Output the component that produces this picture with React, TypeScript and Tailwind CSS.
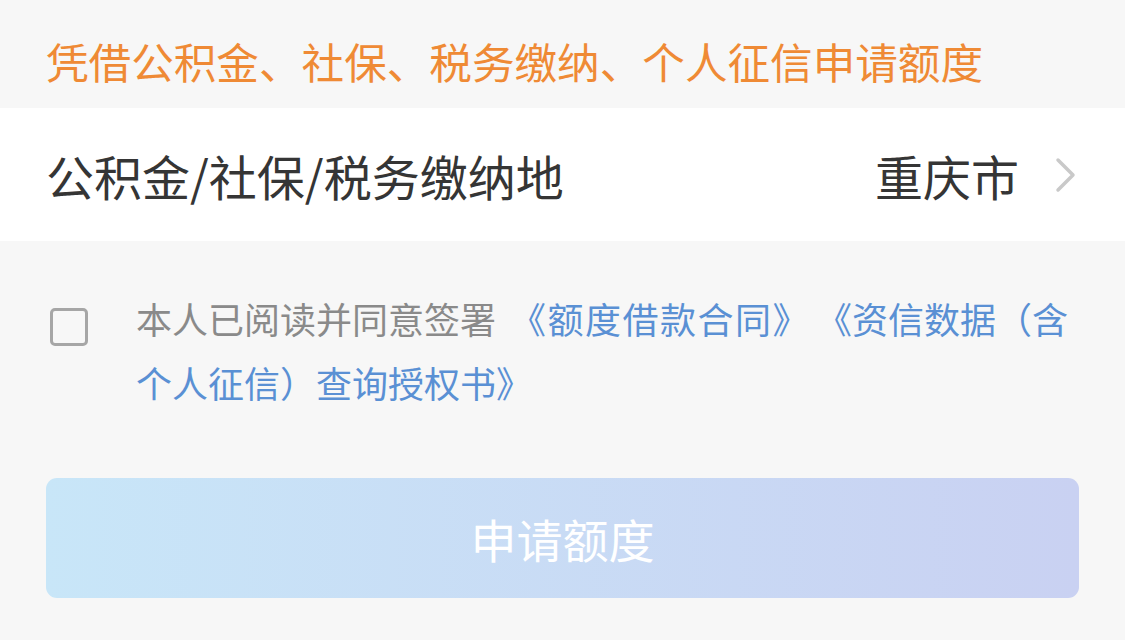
const font = { fontFamily: '"Noto Sans CJK SC", "Noto Sans", sans-serif' }

export default function App() {
  return (
    <div className="w-[1125px] h-[640px] bg-[#f7f7f7] overflow-hidden" style={font}>
      {/* Tip */}
      <div className="h-[108px] pl-[46px] flex items-center">
        <span className="text-[42.6px] leading-none text-[#ef8a35] pt-[14px]">
          凭借公积金、社保、税务缴纳、个人征信申请额度
        </span>
      </div>

      {/* Location row */}
      <div className="h-[133px] bg-white pl-[46px] pr-[48px] flex items-center justify-between">
        <span className="text-[48px] leading-none text-[#353535]">公积金/社保/税务缴纳地</span>
        <div className="flex items-center gap-[36px]">
          <span className="text-[48px] leading-none text-[#353535]">重庆市</span>
          <svg width="22" height="36" viewBox="0 0 22 36" fill="none">
            <path d="M3 3 L18 18 L3 33" stroke="#c9c9c9" strokeWidth="3.5" strokeLinecap="round" strokeLinejoin="round" />
          </svg>
        </div>
      </div>

      {/* Agreement */}
      <div className="flex items-start pl-[50px] pr-[45px] pt-[45px]">
        <div className="w-[38px] h-[38px] mt-[22px] shrink-0 border-[3px] border-[#a6a6a6] rounded-[5px]" />
        <p className="ml-[48px] text-[36px] leading-[64px] text-[#8a8a8a]">
          本人已阅读并同意签署
          <span className="text-[#5a90d4]">
            <span className="ml-[14px] tracking-[1.5px]">《额度借款合同》</span>
            <span className="ml-[24px]">《资信数据（含个人征信）查询授权书》</span>
          </span>
        </p>
      </div>

      {/* Button */}
      <div className="px-[46px] pt-[64px]">
        <button className="w-full h-[120px] rounded-[11px] bg-gradient-to-r from-[#c8e6f8] to-[#c9d1f2] flex items-center justify-center">
          <span className="text-[46px] leading-none text-white">申请额度</span>
        </button>
      </div>
    </div>
  )
}
